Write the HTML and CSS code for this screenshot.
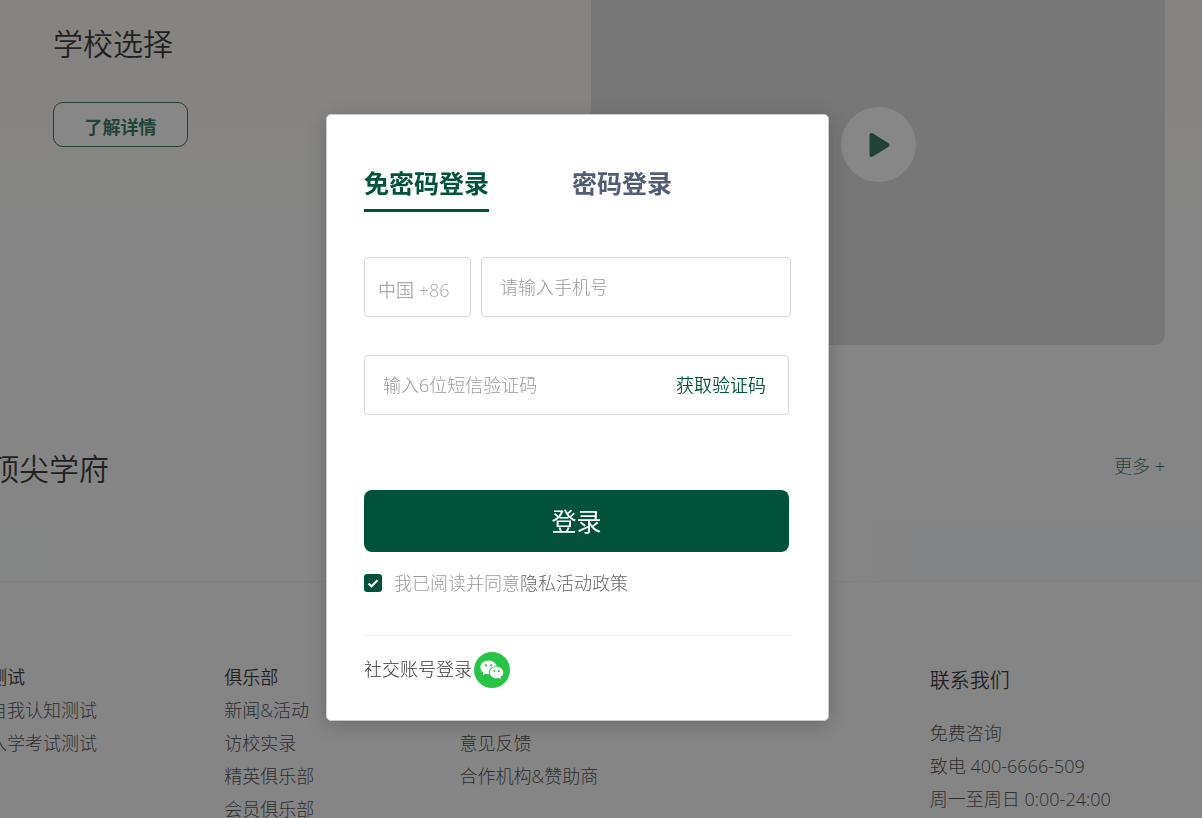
FILE: index.html
```
<!DOCTYPE html>
<html lang="zh-CN">
<head>
  <meta charset="UTF-8">
  <meta name="viewport" content="width=device-width, initial-scale=1.0">
  <title>登录</title>
  <link rel="stylesheet" href="styles.css">
</head>
<body>
  <div class="page">
    <div class="hero">
      <div class="wrap hero-inner">
        <div class="hero-text">
          <h1 class="title">学校选择</h1>
          <button type="button" class="more-btn">了解详情</button>
        </div>
        <div class="video">
          <button type="button" class="play" aria-label="播放">
            <svg width="26" height="26" viewBox="0 0 26 26">
              <path d="M6.500 3 L22.500 13 L6.500 23 Z" fill="#00543d" stroke="#00543d" stroke-width="4" stroke-linejoin="round"/>
            </svg>
          </button>
        </div>
      </div>
    </div>

    <div class="wrap schools">
      <h2 class="title">顶尖学府</h2>
      <a class="more" href="#">更多 +</a>
    </div>
    <div class="strip"></div>

    <footer class="footer">
      <div class="wrap footer-cols">
        <div class="footer-col">
          <h3>测试</h3>
          <a href="#">自我认知测试</a>
          <a href="#">入学考试测试</a>
        </div>
        <div class="footer-col">
          <h3>俱乐部</h3>
          <a href="#">新闻&amp;活动</a>
          <a href="#">访校实录</a>
          <a href="#">精英俱乐部</a>
          <a href="#">会员俱乐部</a>
        </div>
        <div class="footer-col feedback">
          <a href="#">意见反馈</a>
          <a href="#">合作机构&amp;赞助商</a>
        </div>
        <div class="footer-col contact">
          <h3>联系我们</h3>
          <p>免费咨询</p>
          <p>致电 400-6666-509</p>
          <p>周一至周日 0:00-24:00</p>
        </div>
      </div>
    </footer>
  </div>

  <div class="mask">
    <form class="login" role="dialog" aria-label="登录">
      <div class="tabs">
        <button type="button" class="tab active">免密码登录</button>
        <button type="button" class="tab">密码登录</button>
      </div>

      <div class="phone-row">
        <select class="field area" aria-label="国家区号">
          <option>中国 +86</option>
        </select>
        <input class="field phone" type="tel" placeholder="请输入手机号" aria-label="手机号">
      </div>

      <div class="field code-row">
        <input class="code" type="text" placeholder="输入6位短信验证码" aria-label="短信验证码">
        <button type="button" class="get-code">获取验证码</button>
      </div>

      <button type="submit" class="submit">登录</button>

      <div class="agree">
        <input type="checkbox" id="agree" class="agree-box" checked>
        <label for="agree">我已阅读并同意</label><a href="#">隐私活动政策</a>
      </div>

      <div class="social">
        <span>社交账号登录</span>
        <button type="button" class="wechat" aria-label="微信登录">
          <svg width="36" height="36" viewBox="0 0 36 36">
            <circle cx="18" cy="18" r="18" fill="#28c445"/>
            <path d="M14.500 8.600c-4.500 0-8.100 3-8.100 6.900 0 2.200 1.200 4.100 3 5.300l-.7 2.500 2.900-1.500c.9.200 1.900.4 2.900.4h.7c-.2-.6-.3-1.200-.3-1.800 0-3.500 3.300-6.200 7.300-6.200h.5c-.7-3.200-4.100-5.600-8.200-5.600z" fill="#fff"/>
            <path d="M29.300 20.400c0-3.200-3.100-5.700-6.800-5.700s-6.700 2.500-6.700 5.700 3 5.800 6.700 5.800c.8 0 1.600-.1 2.300-.3l2.200 1.200-.6-2c1.800-1.100 2.900-2.800 2.900-4.700z" fill="#fff"/>
            <g fill="#28c445">
              <circle cx="11.900" cy="13.400" r="1.100"/>
              <circle cx="17.200" cy="13.400" r="1.100"/>
              <circle cx="20.300" cy="19" r="1"/>
              <circle cx="24.900" cy="19" r="1"/>
            </g>
          </svg>
        </button>
      </div>
    </form>
  </div>
</body>
</html>
```
FILE: styles.css
```
* {
  box-sizing: border-box;
}

body {
  margin: 0;
  font-family: "Open Sans", "Noto Sans CJK SC", sans-serif;
  font-size: 18px;
  font-weight: 300;
  color: #222;
  background-color: #fafafa;
  overflow: hidden;
}

h1, h2, h3, p {
  margin: 0;
  font-weight: 350;
}

p {
  font-weight: 300;
}

a {
  color: inherit;
  text-decoration: none;
}

button, input, select {
  font: inherit;
  margin: 0;
}

button {
  padding: 0;
  border: none;
  background: none;
  cursor: pointer;
}

/* page */
.page {
  height: 100vh;
  overflow: hidden;
}

.wrap {
  margin: 0 37px 0 -11px;
}

.title {
  font-size: 30px;
  line-height: 45px;
  color: #000;
}

.hero {
  margin-top: -56px;
  background: linear-gradient(180deg, #faf7ec 0%, #faf8f4 35%, #fafafa 75%);
}

.hero-inner {
  display: flex;
}

.hero-text {
  flex: 1;
  padding: 77px 0 0 64px;
}

.more-btn {
  display: block;
  width: 135px;
  height: 45px;
  margin-top: 36px;
  padding-top: 2px;
  border: 1px solid #00543d;
  border-radius: 10px;
  background-color: #fff;
  color: #00543d;
  font-weight: 700;
}

.video {
  display: flex;
  align-items: center;
  justify-content: center;
  width: 574px;
  height: 401px;
  border-radius: 0 0 10px 0;
  background-color: #d7d7d7;
}

.play {
  display: flex;
  align-items: center;
  justify-content: center;
  width: 75px;
  height: 75px;
  border-radius: 50%;
  background-color: #fff;
}

.schools {
  display: flex;
  justify-content: space-between;
  padding: 101px 0 29px;
}

.more {
  line-height: 40px;
  color: #00543d;
}

.strip {
  height: 62px;
  border-bottom: 1px solid #eee;
  background: linear-gradient(90deg, #f8faf9 0%, #fafafa 10%, #fafafa 60%, #f5f7fa 85%);
}

.footer {
  padding-top: 79px;
}

.footer-cols {
  display: grid;
  grid-template-columns: repeat(5, 1fr);
}

.footer-col {
  display: flex;
  flex-direction: column;
  line-height: 33px;
  white-space: nowrap;
}

.footer-col h3 {
  font-size: 18px;
  color: #000;
}

.feedback {
  padding-top: 66px;
}

.contact {
  grid-column: 5;
  padding-top: 3px;
}

.footer-col.contact h3 {
  margin-bottom: 20px;
  font-size: 20px;
}

/* login dialog */
.mask {
  position: fixed;
  inset: 0;
  display: flex;
  align-items: flex-start;
  justify-content: center;
  padding: 114px 47px 0 0;
  background-color: rgba(55, 55, 55, 0.6);
}

.login {
  width: 503px;
  padding: 44px 37px 32px;
  border: 1px solid #ccc;
  border-radius: 5px;
  background-color: #fff;
  box-shadow: 0 4px 20px rgba(0, 0, 0, 0.2);
}

.tabs {
  display: flex;
  gap: 83px;
  margin-bottom: 45px;
}

.tab {
  height: 53px;
  padding-bottom: 4px;
  border-bottom: 3px solid transparent;
  font-size: 25px;
  font-weight: 700;
  color: #525c74;
}

.tab.active {
  border-color: #00543d;
  color: #00543d;
}

.field {
  height: 60px;
  border: 1px solid #d9d9d9;
  border-radius: 4px;
  background-color: #fff;
}

.phone-row {
  display: flex;
  gap: 10px;
  margin-bottom: 38px;
}

.area {
  appearance: none;
  width: 107px;
  padding: 6px 0 0 13px;
  color: #aaa;
  font-weight: 350;
}

.phone {
  flex: 1;
  min-width: 0;
  padding: 0 18px;
}

.code-row {
  display: flex;
  margin-right: 2px;
  padding: 0 22px 0 18px;
}

.code {
  flex: 1;
  min-width: 0;
  padding: 0;
  border: none;
  outline: none;
}

.phone::placeholder,
.code::placeholder {
  color: #999;
}

.get-code {
  padding-bottom: 2px;
  color: #00543d;
  font-weight: 350;
}

.submit {
  display: block;
  width: calc(100% - 2px);
  height: 62px;
  margin-top: 75px;
  padding-bottom: 2px;
  border-radius: 8px;
  background-color: #00523b;
  color: #fff;
  font-size: 25px;
  font-weight: 400;
}

.agree {
  display: flex;
  align-items: center;
  height: 62px;
  margin-bottom: 21px;
  color: #999;
}

.agree label,
.agree a {
  padding-bottom: 3px;
}

.agree-box {
  appearance: none;
  width: 18px;
  height: 18px;
  margin-right: 12px;
  border-radius: 3px;
  background: #00523b url("data:image/svg+xml,%3Csvg xmlns='http://www.w3.org/2000/svg' viewBox='0 0 18 18'%3E%3Cpath d='M4.500 9.500l3 2.700 6-6' fill='none' stroke='%23fff' stroke-width='2.200'/%3E%3C/svg%3E") center no-repeat;
}

.agree a {
  color: #666;
}

.social {
  display: flex;
  align-items: center;
  gap: 2px;
  padding-top: 16px;
  border-top: 1px solid #eee;
  color: #333;
}

.social span {
  padding-bottom: 4px;
}

.wechat {
  display: flex;
}
```
